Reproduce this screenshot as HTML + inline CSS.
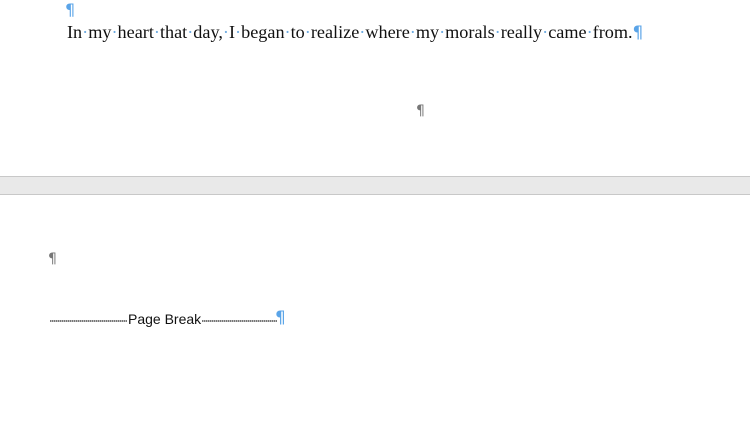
<!DOCTYPE html>
<html><head><style>
body{margin:0;width:750px;height:423px;background:#fff;position:relative;overflow:hidden}
.a{position:absolute;white-space:nowrap}
.t{font-family:"Liberation Serif",serif;font-size:18.2px;color:#111}
.d{color:#6aa9e0}
.p{font-family:"DejaVu Sans",sans-serif;color:#777;font-size:14px}
.bp{font-family:"DejaVu Sans",sans-serif;color:#5aa4e8;font-size:17px}
.band{position:absolute;left:0;top:176px;width:750px;height:17px;background:#e9e9e9;border-top:1px solid #c8c8c8;border-bottom:1px solid #c8c8c8}
.ln{position:absolute;height:2px;background:repeating-linear-gradient(90deg,#777 0 1px,#bbb 1px 2px)}
</style></head><body>
<div class="a bp" style="left:65px;top:0px;font-size:16px">¶</div>
<div class="a t" style="left:67px;top:22px">In<span class="d">·</span>my<span class="d">·</span>heart<span class="d">·</span>that<span class="d">·</span>day,<span class="d">·</span>I<span class="d">·</span>began<span class="d">·</span>to<span class="d">·</span>realize<span class="d">·</span>where<span class="d">·</span>my<span class="d">·</span>morals<span class="d">·</span>really<span class="d">·</span>came<span class="d">·</span>from.<span class="bp" style="font-size:17px">¶</span></div>
<div class="a p" style="left:416px;top:103px">¶</div>
<div class="band"></div>
<div class="a p" style="left:48px;top:251px">¶</div>
<div class="ln" style="left:50px;top:320px;width:77px"></div>
<div class="a" style="left:128px;top:311px;font-family:'Liberation Sans',sans-serif;font-size:14px;color:#111">Page Break</div>
<div class="ln" style="left:202px;top:320px;width:75px"></div>
<div class="a bp" style="left:275px;top:308px">¶</div>
</body></html>
